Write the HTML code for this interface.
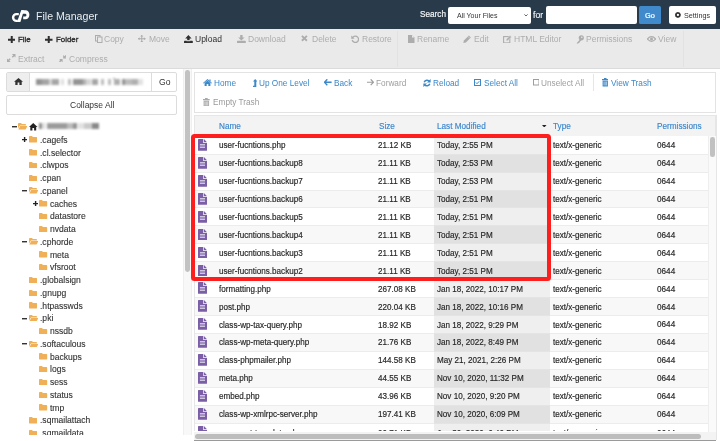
<!DOCTYPE html>
<html><head><meta charset="utf-8"><style>
html,body{margin:0;padding:0;width:720px;height:441px;overflow:hidden;background:#fff;}
body{position:relative;font-family:"Liberation Sans",sans-serif;}
.t{position:absolute;white-space:nowrap;line-height:1;will-change:transform;}
.r{position:absolute;display:block;}
</style></head><body>
<div class="r" style="left:0px;top:0px;width:720px;height:29px;background:#293a4a;"></div>
<svg class="r" style="left:9px;top:9px;" width="24" height="15" viewBox="0 0 24 15"><path d="M9.8 5.1 H7.5 A3.4 3.4 0 0 0 7.5 11.9 H8.8" fill="none" stroke="#fff" stroke-width="2.4"/><path d="M8.0 13.1 L11.4 13.1 L14.9 1.3 L12.2 1.3Z" fill="#fff"/><path d="M12.2 1.3 H16.6 A3.8 4.45 0 0 1 16.6 10.2 H14.2 V7.6 H16.0 A1.45 1.45 0 0 0 16.0 4.7 H13.5Z" fill="#fff"/></svg>
<div class="t" style="left:35.60px;top:11.03px;font-size:10.6px;color:#e9edf0;font-weight:normal;">File Manager</div>
<div class="t" style="left:420.30px;top:11.16px;font-size:8.2px;color:#f2f4f6;font-weight:normal;-webkit-text-stroke:0.2px #f2f4f6">Search</div>
<div class="r" style="left:448px;top:6.5px;width:82.5px;height:17px;background:#fff;border-radius:2px"></div>
<div class="t" style="left:456.70px;top:11.67px;font-size:7px;color:#333;font-weight:normal;">All Your Files</div>
<svg class="r" style="left:524.2px;top:14.4px;" width="4" height="2.6" viewBox="0 0 4 2.6"><path d="M0.4 0.4 L2 2 L3.6 0.4" stroke="#555" stroke-width="0.9" fill="none"/></svg>
<div class="t" style="left:532.50px;top:10.72px;font-size:8.6px;color:#f2f4f6;font-weight:normal;-webkit-text-stroke:0.15px #f2f4f6">for</div>
<div class="r" style="left:545.5px;top:6px;width:91.5px;height:17.5px;background:#fff;border-radius:2px"></div>
<div class="r" style="left:639.1px;top:6.1px;width:22.2px;height:17.7px;background:#408acc;border-radius:1.5px"></div>
<div class="t" style="left:645.30px;top:11.54px;font-size:7.4px;color:#fff;font-weight:normal;-webkit-text-stroke:0.2px #fff">Go</div>
<div class="r" style="left:669px;top:6.3px;width:47.4px;height:17.4px;background:#fff;border-radius:2px"></div>
<svg class="r" style="left:675.3px;top:11.9px;" width="5.8" height="5.8" viewBox="0 0 5.8 5.8"><g transform="translate(2.9 2.9)"><circle r="1.9" fill="none" stroke="#333" stroke-width="1.5"/><rect x="-0.6" y="-2.9" width="1.2" height="1.4" fill="#333" transform="rotate(0)"/><rect x="-0.6" y="-2.9" width="1.2" height="1.4" fill="#333" transform="rotate(45)"/><rect x="-0.6" y="-2.9" width="1.2" height="1.4" fill="#333" transform="rotate(90)"/><rect x="-0.6" y="-2.9" width="1.2" height="1.4" fill="#333" transform="rotate(135)"/><rect x="-0.6" y="-2.9" width="1.2" height="1.4" fill="#333" transform="rotate(180)"/><rect x="-0.6" y="-2.9" width="1.2" height="1.4" fill="#333" transform="rotate(225)"/><rect x="-0.6" y="-2.9" width="1.2" height="1.4" fill="#333" transform="rotate(270)"/><rect x="-0.6" y="-2.9" width="1.2" height="1.4" fill="#333" transform="rotate(315)"/></g></svg>
<div class="t" style="left:684.00px;top:11.51px;font-size:7.2px;color:#333;font-weight:normal;">Settings</div>
<div class="r" style="left:0px;top:29px;width:720px;height:39.5px;background:#eaeaea;"></div>
<div class="r" style="left:0px;top:68px;width:720px;height:1px;background:#d9dbdd;"></div>
<div class="t" style="left:18.00px;top:35.51px;font-size:7.9px;color:#2f2f2f;font-weight:normal;-webkit-text-stroke:0.35px #2f2f2f">File</div>
<div class="t" style="left:56.30px;top:35.51px;font-size:7.9px;color:#2f2f2f;font-weight:normal;-webkit-text-stroke:0.35px #2f2f2f">Folder</div>
<div class="t" style="left:104.40px;top:35.00px;font-size:8.5px;color:#adadad;font-weight:normal;">Copy</div>
<div class="t" style="left:148.90px;top:35.00px;font-size:8.5px;color:#adadad;font-weight:normal;">Move</div>
<div class="t" style="left:194.90px;top:35.00px;font-size:8.5px;color:#2f2f2f;font-weight:normal;">Upload</div>
<div class="t" style="left:247.50px;top:35.00px;font-size:8.5px;color:#adadad;font-weight:normal;">Download</div>
<div class="t" style="left:311.50px;top:35.00px;font-size:8.5px;color:#adadad;font-weight:normal;">Delete</div>
<div class="t" style="left:361.50px;top:35.00px;font-size:8.5px;color:#adadad;font-weight:normal;">Restore</div>
<div class="r" style="left:397px;top:31px;width:1px;height:36px;background:#e2e2e2;"></div>
<div class="t" style="left:417.00px;top:35.00px;font-size:8.5px;color:#adadad;font-weight:normal;">Rename</div>
<div class="t" style="left:473.80px;top:35.00px;font-size:8.5px;color:#adadad;font-weight:normal;">Edit</div>
<div class="t" style="left:514.30px;top:35.00px;font-size:8.5px;color:#adadad;font-weight:normal;">HTML Editor</div>
<div class="t" style="left:586.20px;top:35.00px;font-size:8.5px;color:#adadad;font-weight:normal;">Permissions</div>
<div class="t" style="left:658.20px;top:35.00px;font-size:8.5px;color:#adadad;font-weight:normal;">View</div>
<div class="r" style="left:683px;top:31px;width:1px;height:36px;background:#e2e2e2;"></div>
<div class="t" style="left:18.00px;top:54.60px;font-size:8.5px;color:#adadad;font-weight:normal;">Extract</div>
<div class="t" style="left:69.00px;top:54.60px;font-size:8.5px;color:#adadad;font-weight:normal;">Compress</div>
<svg class="r" style="left:7.5px;top:35.5px;" width="7.5" height="7.5" viewBox="0 0 7.5 7.5"><path d="M3.75 0 V7.5 M0 3.75 H7.5" stroke="#2f2f2f" stroke-width="2"/></svg>
<svg class="r" style="left:45.3px;top:35.5px;" width="7.5" height="7.5" viewBox="0 0 7.5 7.5"><path d="M3.75 0 V7.5 M0 3.75 H7.5" stroke="#2f2f2f" stroke-width="2"/></svg>
<svg class="r" style="left:95px;top:34.9px;" width="7.5" height="7.8" viewBox="0 0 7.5 7.8"><rect x="0.5" y="0.5" width="4.5" height="5.5" fill="none" stroke="#adadad" stroke-width="1"/><rect x="2.5" y="2" width="4.5" height="5.5" fill="#eaeaea" stroke="#adadad" stroke-width="1"/></svg>
<svg class="r" style="left:138.4px;top:34.8px;" width="7.5" height="7.5" viewBox="0 0 7.5 7.5"><path d="M3.75 0 V7.5 M0 3.75 H7.5" stroke="#adadad" stroke-width="1"/><path d="M3.75 0 L2.2 1.6 H5.3Z M3.75 7.5 L2.2 5.9 H5.3Z M0 3.75 L1.6 2.2 V5.3Z M7.5 3.75 L5.9 2.2 V5.3Z" fill="#adadad"/></svg>
<svg class="r" style="left:184.1px;top:34.9px;" width="8.8" height="8.2" viewBox="0 0 8.8 8.2"><path d="M4.4 0 L1.2 3.4 H3.2 V6 H5.6 V3.4 H7.6Z" fill="#2f2f2f"/><rect x="0" y="5.8" width="8.8" height="2.4" rx="0.6" fill="#2f2f2f"/><rect x="2.6" y="5.2" width="3.6" height="1" fill="#eaeaea"/></svg>
<svg class="r" style="left:237px;top:35px;" width="8.8" height="8.2" viewBox="0 0 8.8 8.2"><path d="M4.4 5.6 L1.2 2.4 H3.2 V0 H5.6 V2.4 H7.6Z" fill="#adadad"/><rect x="0" y="5.8" width="8.8" height="2.4" rx="0.6" fill="#adadad"/></svg>
<svg class="r" style="left:301.3px;top:35.3px;" width="6.8" height="6.6" viewBox="0 0 6.8 6.6"><path d="M0.9 0.9 L5.9 5.7 M5.9 0.9 L0.9 5.7" stroke="#adadad" stroke-width="1.9"/></svg>
<svg class="r" style="left:351px;top:34.7px;" width="8" height="8" viewBox="0 0 8 8"><path d="M1.6 2.6 A3.2 3.2 0 1 1 1.2 5" fill="none" stroke="#adadad" stroke-width="1.3"/><path d="M0.2 0.6 L0.4 4 L3.6 3.4Z" fill="#adadad"/></svg>
<svg class="r" style="left:408.3px;top:34.5px;" width="6.5" height="8.3" viewBox="0 0 6.5 8.3"><path d="M0 0 H4 L6.5 2.5 V8.3 H0Z" fill="#adadad"/><path d="M4 0 V2.5 H6.5" fill="#eaeaea"/></svg>
<svg class="r" style="left:463.2px;top:34.5px;" width="8.3" height="8.3" viewBox="0 0 8.3 8.3"><path d="M0.3 8.0 L0.9 5.4 L5.9 0.4 L7.9 2.4 L2.9 7.4Z" fill="#adadad"/><path d="M4.9 1.4 L6.9 3.4" stroke="#eaeaea" stroke-width="0.5"/></svg>
<svg class="r" style="left:503px;top:34.5px;" width="9" height="8.5" viewBox="0 0 9 8.5"><rect x="0.6" y="1.6" width="6.2" height="6.3" fill="none" stroke="#adadad" stroke-width="1.1"/><path d="M3 5.8 L3.3 4.2 L7 0.5 L8.5 2 L4.8 5.7Z" fill="#adadad" stroke="#eaeaea" stroke-width="0.5"/></svg>
<svg class="r" style="left:576px;top:34.6px;" width="8" height="9" viewBox="0 0 8 9"><circle cx="5.3" cy="2.8" r="2.6" fill="#adadad"/><path d="M4.2 4.2 L0.6 8.2 L1.4 8.8 L2.3 8 L3 8.5 L3.4 7.4 L5.6 4.8Z" fill="#adadad"/><circle cx="5.8" cy="2.3" r="0.8" fill="#eaeaea"/></svg>
<svg class="r" style="left:647px;top:36.2px;" width="9" height="6" viewBox="0 0 9 6"><path d="M0.3 3 Q4.5 -1.8 8.7 3 Q4.5 7.8 0.3 3Z" fill="none" stroke="#adadad" stroke-width="1.2"/><circle cx="4.5" cy="3" r="1.5" fill="#adadad"/></svg>
<svg class="r" style="left:7.3px;top:54.3px;" width="8.5" height="8" viewBox="0 0 8.5 8"><path d="M1.2 6.8 L3.2 4.8 M5.3 3.2 L7.3 1.2" stroke="#adadad" stroke-width="1.5"/><path d="M0 8 V4.4 L3.6 8Z M8.5 0 V3.6 L4.9 0Z" fill="#adadad"/></svg>
<svg class="r" style="left:58.7px;top:54.8px;" width="7.8" height="7.5" viewBox="0 0 7.8 7.5"><path d="M0.6 6.9 L2.6 4.9 M5.2 2.6 L7.2 0.6" stroke="#adadad" stroke-width="1.5"/><path d="M3.6 4 V7.4 L0.2 4Z M4.2 3.4 H7.6 L4.2 0Z" fill="#adadad"/></svg>
<div class="r" style="left:6px;top:72.2px;width:170.8px;height:19.8px;background:#fff;border:1px solid #dcdcdc;border-radius:2px;box-sizing:border-box"></div>
<div class="r" style="left:6.5px;top:72.7px;width:23px;height:18.8px;background:#eeeeee;border-right:1px solid #dcdcdc;box-sizing:border-box"></div>
<svg class="r" style="left:13.5px;top:78px;" width="9" height="7" viewBox="0 0 9 7"><path d="M4.5 0 L0 3.8 H1.3 V7 H3.6 V4.6 H5.4 V7 H7.7 V3.8 H9Z" fill="#333"/></svg>
<div class="r" style="left:34px;top:77.3px;width:112px;height:8px;filter:blur(0.9px);"><div style="position:absolute;left:1.9px;top:2.0px;width:5.9px;height:5.6px;background:#555;opacity:0.63"></div><div style="position:absolute;left:7.8px;top:2.0px;width:7.5px;height:5.6px;background:#666;opacity:0.59"></div><div style="position:absolute;left:15.2px;top:2.0px;width:3.0px;height:5.6px;background:#aaa;opacity:0.49"></div><div style="position:absolute;left:18.2px;top:2.0px;width:6.6px;height:5.6px;background:#666;opacity:0.59"></div><div style="position:absolute;left:27.3px;top:2.0px;width:2.5px;height:5.6px;background:#bbb;opacity:0.49"></div><div style="position:absolute;left:34.0px;top:2.0px;width:2.5px;height:5.6px;background:#888;opacity:0.56"></div><div style="position:absolute;left:39.0px;top:2.0px;width:10.0px;height:5.6px;background:#555;opacity:0.63"></div><div style="position:absolute;left:49.0px;top:2.0px;width:3.3px;height:5.6px;background:#777;opacity:0.56"></div><div style="position:absolute;left:52.3px;top:2.0px;width:5.0px;height:5.6px;background:#aaa;opacity:0.49"></div><div style="position:absolute;left:57.7px;top:2.0px;width:6.6px;height:5.6px;background:#666;opacity:0.59"></div><div style="position:absolute;left:66.8px;top:2.0px;width:3.4px;height:5.6px;background:#888;opacity:0.56"></div><div style="position:absolute;left:73.5px;top:2.0px;width:3.3px;height:5.6px;background:#888;opacity:0.56"></div><div style="position:absolute;left:80.0px;top:2.0px;width:6.0px;height:5.6px;background:#777;opacity:0.59"></div><div style="position:absolute;left:87.7px;top:2.0px;width:3.3px;height:5.6px;background:#555;opacity:0.63"></div><div style="position:absolute;left:91.0px;top:2.0px;width:6.7px;height:5.6px;background:#888;opacity:0.56"></div><div style="position:absolute;left:97.7px;top:2.0px;width:6.6px;height:5.6px;background:#777;opacity:0.59"></div><div style="position:absolute;left:104.3px;top:2.0px;width:5.0px;height:5.6px;background:#bbb;opacity:0.42"></div><div style="position:absolute;left:78.5px;top:0.4px;width:2.5px;height:1.8px;background:#555;opacity:0.56"></div></div>
<div class="r" style="left:151.3px;top:72.7px;width:1px;height:18.8px;background:#dcdcdc;"></div>
<div class="t" style="left:158.50px;top:78.32px;font-size:8.6px;color:#333;font-weight:normal;">Go</div>
<div class="r" style="left:6px;top:94.5px;width:170.8px;height:20px;background:#fff;border:1px solid #dcdcdc;border-radius:2px;box-sizing:border-box"></div>
<div class="t" style="left:69.80px;top:100.90px;font-size:8.5px;color:#333;font-weight:normal;">Collapse All</div>
<div class="r" style="left:183.2px;top:68.5px;width:8.7px;height:366px;background:#f8f8f8;border-left:1px solid #efefef;border-right:1px solid #efefef;box-sizing:border-box"></div>
<div class="r" style="left:185.1px;top:69.7px;width:4.8px;height:202.5px;background:#c2c2c2;border-radius:2.4px"></div>
<div class="r" style="left:12px;top:126px;width:5px;height:1px;background:#333;"></div>
<div class="r" style="left:12px;top:127px;width:5px;height:1px;background:#aaa;"></div>
<svg class="r" style="left:18px;top:123.4px;" width="9.4" height="6.4" viewBox="0 0 9.4 6.4"><path d="M0 0.8 Q0 0 0.8 0 H3.0 L3.9 1.0 H7.2 Q8.0 1.0 8.0 1.8 V2.4 H2.0 L0 5.6Z" fill="#f0b057"/><path d="M2.2 2.9 H9.4 L7.6 6.4 H0.3Z" fill="#f0b057"/></svg>
<svg class="r" style="left:29px;top:123.0px;" width="8.5" height="7.5" viewBox="0 0 8.5 7.5"><path d="M4.25 0 L0 3.9 H1.3 V7.5 H3.4 V5 H5.1 V7.5 H7.2 V3.9 H8.5Z" fill="#222"/></svg>
<div class="r" style="left:38px;top:121.9px;width:62px;height:8px;filter:blur(0.8px);"><div style="position:absolute;left:1.0px;top:1.5px;width:2.5px;height:5.3px;background:#444;opacity:0.63"></div><div style="position:absolute;left:5.0px;top:1.5px;width:2.0px;height:5.3px;background:#999;opacity:0.42"></div><div style="position:absolute;left:9.0px;top:1.5px;width:20.0px;height:5.3px;background:#555;opacity:0.59"></div><div style="position:absolute;left:29.0px;top:1.5px;width:6.0px;height:5.3px;background:#888;opacity:0.56"></div><div style="position:absolute;left:35.0px;top:1.5px;width:4.0px;height:5.3px;background:#555;opacity:0.63"></div><div style="position:absolute;left:40.0px;top:1.5px;width:6.0px;height:5.3px;background:#bbb;opacity:0.42"></div><div style="position:absolute;left:46.0px;top:1.5px;width:8.0px;height:5.3px;background:#999;opacity:0.52"></div><div style="position:absolute;left:54.0px;top:1.5px;width:6.6px;height:5.3px;background:#444;opacity:0.63"></div></div>
<div class="r" style="left:0;top:0;width:183px;height:435.1px;overflow:hidden"><svg class="r" style="left:22.2px;top:137.0px;" width="5.2" height="5.2" viewBox="0 0 5.2 5.2"><path d="M2.6 0 V5.2 M0 2.6 H5.2" stroke="#222" stroke-width="1.4"/></svg>
<svg class="r" style="left:28.9px;top:136.4px;" width="8.2" height="6.4" viewBox="0 0 8.2 6.4"><path d="M0 0.8 Q0 0 0.8 0 H3.0 L3.9 1.0 H7.4 Q8.2 1.0 8.2 1.8 V5.8 Q8.2 6.4 7.6 6.4 H0.6 Q0 6.4 0 5.8Z" fill="#f0b057"/></svg>
<div class="t" style="left:39.60px;top:135.76px;font-size:8.55px;color:#333;font-weight:normal;-webkit-text-stroke:0.12px #333">.cagefs</div>
<svg class="r" style="left:28.9px;top:149.16px;" width="8.2" height="6.4" viewBox="0 0 8.2 6.4"><path d="M0 0.8 Q0 0 0.8 0 H3.0 L3.9 1.0 H7.4 Q8.2 1.0 8.2 1.8 V5.8 Q8.2 6.4 7.6 6.4 H0.6 Q0 6.4 0 5.8Z" fill="#f0b057"/></svg>
<div class="t" style="left:39.60px;top:148.52px;font-size:8.55px;color:#333;font-weight:normal;-webkit-text-stroke:0.12px #333">.cl.selector</div>
<svg class="r" style="left:28.9px;top:161.92000000000002px;" width="8.2" height="6.4" viewBox="0 0 8.2 6.4"><path d="M0 0.8 Q0 0 0.8 0 H3.0 L3.9 1.0 H7.4 Q8.2 1.0 8.2 1.8 V5.8 Q8.2 6.4 7.6 6.4 H0.6 Q0 6.4 0 5.8Z" fill="#f0b057"/></svg>
<div class="t" style="left:39.60px;top:161.28px;font-size:8.55px;color:#333;font-weight:normal;-webkit-text-stroke:0.12px #333">.clwpos</div>
<svg class="r" style="left:28.9px;top:174.68px;" width="8.2" height="6.4" viewBox="0 0 8.2 6.4"><path d="M0 0.8 Q0 0 0.8 0 H3.0 L3.9 1.0 H7.4 Q8.2 1.0 8.2 1.8 V5.8 Q8.2 6.4 7.6 6.4 H0.6 Q0 6.4 0 5.8Z" fill="#f0b057"/></svg>
<div class="t" style="left:39.60px;top:174.04px;font-size:8.55px;color:#333;font-weight:normal;-webkit-text-stroke:0.12px #333">.cpan</div>
<div class="r" style="left:22px;top:190px;width:5px;height:1px;background:#333;"></div>
<div class="r" style="left:22px;top:191px;width:5px;height:1px;background:#aaa;"></div>
<svg class="r" style="left:28.6px;top:187.44px;" width="9.4" height="6.4" viewBox="0 0 9.4 6.4"><path d="M0 0.8 Q0 0 0.8 0 H3.0 L3.9 1.0 H7.2 Q8.0 1.0 8.0 1.8 V2.4 H2.0 L0 5.6Z" fill="#f0b057"/><path d="M2.2 2.9 H9.4 L7.6 6.4 H0.3Z" fill="#f0b057"/></svg>
<div class="t" style="left:39.60px;top:186.80px;font-size:8.55px;color:#333;font-weight:normal;-webkit-text-stroke:0.12px #333">.cpanel</div>
<svg class="r" style="left:32.7px;top:200.8px;" width="5.2" height="5.2" viewBox="0 0 5.2 5.2"><path d="M2.6 0 V5.2 M0 2.6 H5.2" stroke="#222" stroke-width="1.4"/></svg>
<svg class="r" style="left:39.4px;top:200.20000000000002px;" width="8.2" height="6.4" viewBox="0 0 8.2 6.4"><path d="M0 0.8 Q0 0 0.8 0 H3.0 L3.9 1.0 H7.4 Q8.2 1.0 8.2 1.8 V5.8 Q8.2 6.4 7.6 6.4 H0.6 Q0 6.4 0 5.8Z" fill="#f0b057"/></svg>
<div class="t" style="left:50.10px;top:199.56px;font-size:8.55px;color:#333;font-weight:normal;-webkit-text-stroke:0.12px #333">caches</div>
<svg class="r" style="left:39.4px;top:212.96px;" width="8.2" height="6.4" viewBox="0 0 8.2 6.4"><path d="M0 0.8 Q0 0 0.8 0 H3.0 L3.9 1.0 H7.4 Q8.2 1.0 8.2 1.8 V5.8 Q8.2 6.4 7.6 6.4 H0.6 Q0 6.4 0 5.8Z" fill="#f0b057"/></svg>
<div class="t" style="left:50.10px;top:212.32px;font-size:8.55px;color:#333;font-weight:normal;-webkit-text-stroke:0.12px #333">datastore</div>
<svg class="r" style="left:39.4px;top:225.72px;" width="8.2" height="6.4" viewBox="0 0 8.2 6.4"><path d="M0 0.8 Q0 0 0.8 0 H3.0 L3.9 1.0 H7.4 Q8.2 1.0 8.2 1.8 V5.8 Q8.2 6.4 7.6 6.4 H0.6 Q0 6.4 0 5.8Z" fill="#f0b057"/></svg>
<div class="t" style="left:50.10px;top:225.08px;font-size:8.55px;color:#333;font-weight:normal;-webkit-text-stroke:0.12px #333">nvdata</div>
<div class="r" style="left:22px;top:241px;width:5px;height:1px;background:#333;"></div>
<div class="r" style="left:22px;top:242px;width:5px;height:1px;background:#aaa;"></div>
<svg class="r" style="left:28.6px;top:238.48px;" width="9.4" height="6.4" viewBox="0 0 9.4 6.4"><path d="M0 0.8 Q0 0 0.8 0 H3.0 L3.9 1.0 H7.2 Q8.0 1.0 8.0 1.8 V2.4 H2.0 L0 5.6Z" fill="#f0b057"/><path d="M2.2 2.9 H9.4 L7.6 6.4 H0.3Z" fill="#f0b057"/></svg>
<div class="t" style="left:39.60px;top:237.84px;font-size:8.55px;color:#333;font-weight:normal;-webkit-text-stroke:0.12px #333">.cphorde</div>
<svg class="r" style="left:39.4px;top:251.24px;" width="8.2" height="6.4" viewBox="0 0 8.2 6.4"><path d="M0 0.8 Q0 0 0.8 0 H3.0 L3.9 1.0 H7.4 Q8.2 1.0 8.2 1.8 V5.8 Q8.2 6.4 7.6 6.4 H0.6 Q0 6.4 0 5.8Z" fill="#f0b057"/></svg>
<div class="t" style="left:50.10px;top:250.60px;font-size:8.55px;color:#333;font-weight:normal;-webkit-text-stroke:0.12px #333">meta</div>
<svg class="r" style="left:39.4px;top:264.0px;" width="8.2" height="6.4" viewBox="0 0 8.2 6.4"><path d="M0 0.8 Q0 0 0.8 0 H3.0 L3.9 1.0 H7.4 Q8.2 1.0 8.2 1.8 V5.8 Q8.2 6.4 7.6 6.4 H0.6 Q0 6.4 0 5.8Z" fill="#f0b057"/></svg>
<div class="t" style="left:50.10px;top:263.36px;font-size:8.55px;color:#333;font-weight:normal;-webkit-text-stroke:0.12px #333">vfsroot</div>
<svg class="r" style="left:28.9px;top:276.76px;" width="8.2" height="6.4" viewBox="0 0 8.2 6.4"><path d="M0 0.8 Q0 0 0.8 0 H3.0 L3.9 1.0 H7.4 Q8.2 1.0 8.2 1.8 V5.8 Q8.2 6.4 7.6 6.4 H0.6 Q0 6.4 0 5.8Z" fill="#f0b057"/></svg>
<div class="t" style="left:39.60px;top:276.12px;font-size:8.55px;color:#333;font-weight:normal;-webkit-text-stroke:0.12px #333">.globalsign</div>
<svg class="r" style="left:28.9px;top:289.52px;" width="8.2" height="6.4" viewBox="0 0 8.2 6.4"><path d="M0 0.8 Q0 0 0.8 0 H3.0 L3.9 1.0 H7.4 Q8.2 1.0 8.2 1.8 V5.8 Q8.2 6.4 7.6 6.4 H0.6 Q0 6.4 0 5.8Z" fill="#f0b057"/></svg>
<div class="t" style="left:39.60px;top:288.88px;font-size:8.55px;color:#333;font-weight:normal;-webkit-text-stroke:0.12px #333">.gnupg</div>
<svg class="r" style="left:28.9px;top:302.28px;" width="8.2" height="6.4" viewBox="0 0 8.2 6.4"><path d="M0 0.8 Q0 0 0.8 0 H3.0 L3.9 1.0 H7.4 Q8.2 1.0 8.2 1.8 V5.8 Q8.2 6.4 7.6 6.4 H0.6 Q0 6.4 0 5.8Z" fill="#f0b057"/></svg>
<div class="t" style="left:39.60px;top:301.64px;font-size:8.55px;color:#333;font-weight:normal;-webkit-text-stroke:0.12px #333">.htpasswds</div>
<div class="r" style="left:22px;top:318px;width:5px;height:1px;background:#333;"></div>
<div class="r" style="left:22px;top:319px;width:5px;height:1px;background:#aaa;"></div>
<svg class="r" style="left:28.6px;top:315.03999999999996px;" width="9.4" height="6.4" viewBox="0 0 9.4 6.4"><path d="M0 0.8 Q0 0 0.8 0 H3.0 L3.9 1.0 H7.2 Q8.0 1.0 8.0 1.8 V2.4 H2.0 L0 5.6Z" fill="#f0b057"/><path d="M2.2 2.9 H9.4 L7.6 6.4 H0.3Z" fill="#f0b057"/></svg>
<div class="t" style="left:39.60px;top:314.40px;font-size:8.55px;color:#333;font-weight:normal;-webkit-text-stroke:0.12px #333">.pki</div>
<svg class="r" style="left:39.4px;top:327.79999999999995px;" width="8.2" height="6.4" viewBox="0 0 8.2 6.4"><path d="M0 0.8 Q0 0 0.8 0 H3.0 L3.9 1.0 H7.4 Q8.2 1.0 8.2 1.8 V5.8 Q8.2 6.4 7.6 6.4 H0.6 Q0 6.4 0 5.8Z" fill="#f0b057"/></svg>
<div class="t" style="left:50.10px;top:327.16px;font-size:8.55px;color:#333;font-weight:normal;-webkit-text-stroke:0.12px #333">nssdb</div>
<div class="r" style="left:22px;top:343px;width:5px;height:1px;background:#333;"></div>
<div class="r" style="left:22px;top:344px;width:5px;height:1px;background:#aaa;"></div>
<svg class="r" style="left:28.6px;top:340.55999999999995px;" width="9.4" height="6.4" viewBox="0 0 9.4 6.4"><path d="M0 0.8 Q0 0 0.8 0 H3.0 L3.9 1.0 H7.2 Q8.0 1.0 8.0 1.8 V2.4 H2.0 L0 5.6Z" fill="#f0b057"/><path d="M2.2 2.9 H9.4 L7.6 6.4 H0.3Z" fill="#f0b057"/></svg>
<div class="t" style="left:39.60px;top:339.92px;font-size:8.55px;color:#333;font-weight:normal;-webkit-text-stroke:0.12px #333">.softaculous</div>
<svg class="r" style="left:39.4px;top:353.31999999999994px;" width="8.2" height="6.4" viewBox="0 0 8.2 6.4"><path d="M0 0.8 Q0 0 0.8 0 H3.0 L3.9 1.0 H7.4 Q8.2 1.0 8.2 1.8 V5.8 Q8.2 6.4 7.6 6.4 H0.6 Q0 6.4 0 5.8Z" fill="#f0b057"/></svg>
<div class="t" style="left:50.10px;top:352.68px;font-size:8.55px;color:#333;font-weight:normal;-webkit-text-stroke:0.12px #333">backups</div>
<svg class="r" style="left:39.4px;top:366.08px;" width="8.2" height="6.4" viewBox="0 0 8.2 6.4"><path d="M0 0.8 Q0 0 0.8 0 H3.0 L3.9 1.0 H7.4 Q8.2 1.0 8.2 1.8 V5.8 Q8.2 6.4 7.6 6.4 H0.6 Q0 6.4 0 5.8Z" fill="#f0b057"/></svg>
<div class="t" style="left:50.10px;top:365.44px;font-size:8.55px;color:#333;font-weight:normal;-webkit-text-stroke:0.12px #333">logs</div>
<svg class="r" style="left:39.4px;top:378.84px;" width="8.2" height="6.4" viewBox="0 0 8.2 6.4"><path d="M0 0.8 Q0 0 0.8 0 H3.0 L3.9 1.0 H7.4 Q8.2 1.0 8.2 1.8 V5.8 Q8.2 6.4 7.6 6.4 H0.6 Q0 6.4 0 5.8Z" fill="#f0b057"/></svg>
<div class="t" style="left:50.10px;top:378.20px;font-size:8.55px;color:#333;font-weight:normal;-webkit-text-stroke:0.12px #333">sess</div>
<svg class="r" style="left:39.4px;top:391.59999999999997px;" width="8.2" height="6.4" viewBox="0 0 8.2 6.4"><path d="M0 0.8 Q0 0 0.8 0 H3.0 L3.9 1.0 H7.4 Q8.2 1.0 8.2 1.8 V5.8 Q8.2 6.4 7.6 6.4 H0.6 Q0 6.4 0 5.8Z" fill="#f0b057"/></svg>
<div class="t" style="left:50.10px;top:390.96px;font-size:8.55px;color:#333;font-weight:normal;-webkit-text-stroke:0.12px #333">status</div>
<svg class="r" style="left:39.4px;top:404.35999999999996px;" width="8.2" height="6.4" viewBox="0 0 8.2 6.4"><path d="M0 0.8 Q0 0 0.8 0 H3.0 L3.9 1.0 H7.4 Q8.2 1.0 8.2 1.8 V5.8 Q8.2 6.4 7.6 6.4 H0.6 Q0 6.4 0 5.8Z" fill="#f0b057"/></svg>
<div class="t" style="left:50.10px;top:403.72px;font-size:8.55px;color:#333;font-weight:normal;-webkit-text-stroke:0.12px #333">tmp</div>
<svg class="r" style="left:28.9px;top:417.11999999999995px;" width="8.2" height="6.4" viewBox="0 0 8.2 6.4"><path d="M0 0.8 Q0 0 0.8 0 H3.0 L3.9 1.0 H7.4 Q8.2 1.0 8.2 1.8 V5.8 Q8.2 6.4 7.6 6.4 H0.6 Q0 6.4 0 5.8Z" fill="#f0b057"/></svg>
<div class="t" style="left:39.60px;top:416.48px;font-size:8.55px;color:#333;font-weight:normal;-webkit-text-stroke:0.12px #333">.sqmailattach</div>
<svg class="r" style="left:28.9px;top:429.88px;" width="8.2" height="6.4" viewBox="0 0 8.2 6.4"><path d="M0 0.8 Q0 0 0.8 0 H3.0 L3.9 1.0 H7.4 Q8.2 1.0 8.2 1.8 V5.8 Q8.2 6.4 7.6 6.4 H0.6 Q0 6.4 0 5.8Z" fill="#f0b057"/></svg>
<div class="t" style="left:39.60px;top:429.24px;font-size:8.55px;color:#333;font-weight:normal;-webkit-text-stroke:0.12px #333">.sqmaildata</div>
</div>
<div class="r" style="left:194.4px;top:72.4px;width:522.1px;height:40.9px;background:#fff;border:1px solid #e3e3e3;box-sizing:border-box"></div>
<svg class="r" style="left:202.8px;top:78.8px;" width="9" height="7" viewBox="0 0 9 7"><path d="M4.5 0 L0 3.9 L0.6 4.5 L4.5 1.2 L8.4 4.5 L9 3.9Z M6.4 0.4 H7.6 V2.4 L6.4 1.4Z" fill="#3c88c9"/><path d="M1.6 3.9 L4.5 1.6 L7.4 3.9 V7 H5.3 V5 H3.7 V7 H1.6Z" fill="#3c88c9"/></svg>
<div class="t" style="left:214.00px;top:79.82px;font-size:8.25px;color:#3c88c9;font-weight:normal;">Home</div>
<svg class="r" style="left:252.7px;top:78.5px;" width="4.3" height="8" viewBox="0 0 4.3 8"><path d="M2.15 0 L0 2.4 H1.3 V6.8 H0 V8 H3.3 V2.4 H4.3Z" fill="#3c88c9"/></svg>
<div class="t" style="left:259.30px;top:79.82px;font-size:8.25px;color:#3c88c9;font-weight:normal;">Up One Level</div>
<svg class="r" style="left:324.4px;top:79.2px;" width="7.6" height="6.5" viewBox="0 0 7.6 6.5"><path d="M3.3 0.3 L0.5 3.25 L3.3 6.2 M0.8 3.25 H7.6" stroke="#3c88c9" stroke-width="1.4" fill="none"/></svg>
<div class="t" style="left:333.80px;top:79.82px;font-size:8.25px;color:#3c88c9;font-weight:normal;">Back</div>
<svg class="r" style="left:367px;top:79.2px;" width="7" height="6.5" viewBox="0 0 7 6.5"><path d="M3.7 0.3 L6.5 3.25 L3.7 6.2 M6.2 3.25 H0" stroke="#9e9e9e" stroke-width="1.2" fill="none"/></svg>
<div class="t" style="left:376.30px;top:79.82px;font-size:8.25px;color:#9e9e9e;font-weight:normal;">Forward</div>
<svg class="r" style="left:422.5px;top:78.6px;" width="8" height="8" viewBox="0 0 8 8"><path d="M6.6 2.4 A3.1 3.1 0 0 0 1.2 3.2" fill="none" stroke="#3c88c9" stroke-width="1.5"/><path d="M7.6 0 V3.6 H4Z" fill="#3c88c9"/><path d="M1.4 5.6 A3.1 3.1 0 0 0 6.8 4.8" fill="none" stroke="#3c88c9" stroke-width="1.5"/><path d="M0.4 8 V4.4 H4Z" fill="#3c88c9"/></svg>
<div class="t" style="left:432.50px;top:79.82px;font-size:8.25px;color:#3c88c9;font-weight:normal;">Reload</div>
<svg class="r" style="left:474.2px;top:79.0px;" width="7" height="7" viewBox="0 0 7 7"><rect x="0.5" y="0.5" width="6" height="6" fill="none" stroke="#3c88c9" stroke-width="1"/><path d="M1.8 3.4 L3 4.7 L5.3 2.2" fill="none" stroke="#3c88c9" stroke-width="1"/></svg>
<div class="t" style="left:483.60px;top:79.82px;font-size:8.25px;color:#3c88c9;font-weight:normal;">Select All</div>
<svg class="r" style="left:532.5px;top:79.3px;" width="6.5" height="6.5" viewBox="0 0 6.5 6.5"><rect x="0.5" y="0.5" width="5.5" height="5.5" fill="none" stroke="#9e9e9e" stroke-width="1"/></svg>
<div class="t" style="left:541.30px;top:79.82px;font-size:8.25px;color:#9e9e9e;font-weight:normal;">Unselect All</div>
<div class="r" style="left:593px;top:74px;width:1px;height:17px;background:#e6e6e6;"></div>
<svg class="r" style="left:601.8px;top:78.0px;" width="6.5" height="8.5" viewBox="0 0 6.5 8.5"><rect x="0" y="1" width="6.5" height="1.2" fill="#3c88c9"/><rect x="2" y="0" width="2.5" height="1.5" fill="#3c88c9"/><path d="M0.6 2.6 H5.9 V8.5 H0.6Z" fill="#3c88c9"/><path d="M2 3.5 V7.5 M3.25 3.5 V7.5 M4.5 3.5 V7.5" stroke="#fff" stroke-width="0.5"/></svg>
<div class="t" style="left:610.80px;top:79.82px;font-size:8.25px;color:#3c88c9;font-weight:normal;">View Trash</div>
<svg class="r" style="left:203.3px;top:97.8px;" width="6.7" height="8.5" viewBox="0 0 6.7 8.5"><rect x="0" y="1" width="6.7" height="1.2" fill="#aaa"/><rect x="2" y="0" width="2.7" height="1.5" fill="#aaa"/><path d="M0.6 2.6 H6.1 V8.5 H0.6Z" fill="#aaa"/><path d="M2 3.5 V7.5 M3.35 3.5 V7.5 M4.7 3.5 V7.5" stroke="#fff" stroke-width="0.5"/></svg>
<div class="t" style="left:212.90px;top:99.22px;font-size:8.25px;color:#9a9a9a;font-weight:normal;">Empty Trash</div>
<div class="r" style="left:194.4px;top:115.4px;width:522.1px;height:20.4px;background:#f3f3f3;border:1px solid #e6e6e6;border-bottom:none;box-sizing:border-box"></div>
<div class="t" style="left:218.50px;top:122.86px;font-size:8.2px;color:#3a86cc;font-weight:normal;-webkit-text-stroke:0.15px #3a86cc">Name</div>
<div class="t" style="left:378.80px;top:122.86px;font-size:8.2px;color:#3a86cc;font-weight:normal;-webkit-text-stroke:0.15px #3a86cc">Size</div>
<div class="t" style="left:437.00px;top:122.86px;font-size:8.2px;color:#3a86cc;font-weight:normal;-webkit-text-stroke:0.15px #3a86cc">Last Modified</div>
<svg class="r" style="left:542px;top:124.8px;" width="4.5" height="2.5" viewBox="0 0 4.5 2.5"><path d="M0 0 H4.5 L2.25 2.5Z" fill="#222"/></svg>
<div class="t" style="left:552.80px;top:122.86px;font-size:8.2px;color:#3a86cc;font-weight:normal;-webkit-text-stroke:0.15px #3a86cc">Type</div>
<div class="t" style="left:657.00px;top:122.86px;font-size:8.2px;color:#3a86cc;font-weight:normal;-webkit-text-stroke:0.15px #3a86cc">Permissions</div>
<div class="r" style="left:194.4px;top:135.8px;width:513.4px;height:295.4px;overflow:hidden;border-left:1px solid #e6e6e6;box-sizing:border-box"><div class="r" style="left:0px;top:0.0px;width:513.4px;height:17.92px;background:#ffffff;"></div>
<div class="r" style="left:238.6px;top:0.0px;width:116px;height:17.92px;background:#efefef;"></div>
<svg class="r" style="left:2.5999999999999943px;top:3.3px;" width="9" height="11.8" viewBox="0 0 9 11.8"><path d="M0.5 0 H5.2 V3.9 H9 V11.3 Q9 11.8 8.5 11.8 H0.5 Q0 11.8 0 11.3 V0.5 Q0 0 0.5 0Z" fill="#7a5fa6"/><path d="M5.9 0.1 L9 3.3 H5.9Z" fill="#7a5fa6"/><rect x="1.9" y="5.0" width="5.1" height="1.0" fill="#cfc5e0"/><rect x="1.9" y="6.5" width="5.1" height="1.0" fill="#cfc5e0"/><rect x="1.9" y="8.0" width="5.1" height="1.0" fill="#cfc5e0"/></svg>
<div class="t" style="left:23.40px;top:6.54px;font-size:8.1px;color:#262626;font-weight:normal;-webkit-text-stroke:0.16px #262626;transform:scaleY(1.11);transform-origin:0 0.8465em">user-fucntions.php</div>
<div class="t" style="left:182.80px;top:6.54px;font-size:8.1px;color:#262626;font-weight:normal;-webkit-text-stroke:0.16px #262626;transform:scaleY(1.11);transform-origin:0 0.8465em">21.12 KB</div>
<div class="t" style="left:241.60px;top:6.54px;font-size:8.1px;color:#262626;font-weight:normal;-webkit-text-stroke:0.16px #262626;transform:scaleY(1.11);transform-origin:0 0.8465em">Today, 2:55 PM</div>
<div class="t" style="left:357.40px;top:6.54px;font-size:8.1px;color:#262626;font-weight:normal;-webkit-text-stroke:0.16px #262626;transform:scaleY(1.11);transform-origin:0 0.8465em">text/x-generic</div>
<div class="t" style="left:461.60px;top:6.46px;font-size:8.2px;color:#262626;font-weight:normal;-webkit-text-stroke:0.16px #262626;transform:scaleY(1.11);transform-origin:0 0.8465em">0644</div>
<div class="r" style="left:0px;top:17.92px;width:513.4px;height:17.92px;background:#f8f8f8;border-top:1px solid #ececec;box-sizing:border-box"></div>
<div class="r" style="left:238.6px;top:17.92px;width:116px;height:17.92px;background:#e1e1e1;border-top:1px solid #e4e4e4;box-sizing:border-box"></div>
<svg class="r" style="left:2.5999999999999943px;top:21.220000000000017px;" width="9" height="11.8" viewBox="0 0 9 11.8"><path d="M0.5 0 H5.2 V3.9 H9 V11.3 Q9 11.8 8.5 11.8 H0.5 Q0 11.8 0 11.3 V0.5 Q0 0 0.5 0Z" fill="#7a5fa6"/><path d="M5.9 0.1 L9 3.3 H5.9Z" fill="#7a5fa6"/><rect x="1.9" y="5.0" width="5.1" height="1.0" fill="#cfc5e0"/><rect x="1.9" y="6.5" width="5.1" height="1.0" fill="#cfc5e0"/><rect x="1.9" y="8.0" width="5.1" height="1.0" fill="#cfc5e0"/></svg>
<div class="t" style="left:23.40px;top:24.46px;font-size:8.1px;color:#262626;font-weight:normal;-webkit-text-stroke:0.16px #262626;transform:scaleY(1.11);transform-origin:0 0.8465em">user-fucntions.backup8</div>
<div class="t" style="left:182.80px;top:24.46px;font-size:8.1px;color:#262626;font-weight:normal;-webkit-text-stroke:0.16px #262626;transform:scaleY(1.11);transform-origin:0 0.8465em">21.11 KB</div>
<div class="t" style="left:241.60px;top:24.46px;font-size:8.1px;color:#262626;font-weight:normal;-webkit-text-stroke:0.16px #262626;transform:scaleY(1.11);transform-origin:0 0.8465em">Today, 2:53 PM</div>
<div class="t" style="left:357.40px;top:24.46px;font-size:8.1px;color:#262626;font-weight:normal;-webkit-text-stroke:0.16px #262626;transform:scaleY(1.11);transform-origin:0 0.8465em">text/x-generic</div>
<div class="t" style="left:461.60px;top:24.38px;font-size:8.2px;color:#262626;font-weight:normal;-webkit-text-stroke:0.16px #262626;transform:scaleY(1.11);transform-origin:0 0.8465em">0644</div>
<div class="r" style="left:0px;top:35.84px;width:513.4px;height:17.92px;background:#ffffff;border-top:1px solid #ececec;box-sizing:border-box"></div>
<div class="r" style="left:238.6px;top:35.84px;width:116px;height:17.92px;background:#efefef;border-top:1px solid #e4e4e4;box-sizing:border-box"></div>
<svg class="r" style="left:2.5999999999999943px;top:39.14px;" width="9" height="11.8" viewBox="0 0 9 11.8"><path d="M0.5 0 H5.2 V3.9 H9 V11.3 Q9 11.8 8.5 11.8 H0.5 Q0 11.8 0 11.3 V0.5 Q0 0 0.5 0Z" fill="#7a5fa6"/><path d="M5.9 0.1 L9 3.3 H5.9Z" fill="#7a5fa6"/><rect x="1.9" y="5.0" width="5.1" height="1.0" fill="#cfc5e0"/><rect x="1.9" y="6.5" width="5.1" height="1.0" fill="#cfc5e0"/><rect x="1.9" y="8.0" width="5.1" height="1.0" fill="#cfc5e0"/></svg>
<div class="t" style="left:23.40px;top:42.38px;font-size:8.1px;color:#262626;font-weight:normal;-webkit-text-stroke:0.16px #262626;transform:scaleY(1.11);transform-origin:0 0.8465em">user-fucntions.backup7</div>
<div class="t" style="left:182.80px;top:42.38px;font-size:8.1px;color:#262626;font-weight:normal;-webkit-text-stroke:0.16px #262626;transform:scaleY(1.11);transform-origin:0 0.8465em">21.11 KB</div>
<div class="t" style="left:241.60px;top:42.38px;font-size:8.1px;color:#262626;font-weight:normal;-webkit-text-stroke:0.16px #262626;transform:scaleY(1.11);transform-origin:0 0.8465em">Today, 2:53 PM</div>
<div class="t" style="left:357.40px;top:42.38px;font-size:8.1px;color:#262626;font-weight:normal;-webkit-text-stroke:0.16px #262626;transform:scaleY(1.11);transform-origin:0 0.8465em">text/x-generic</div>
<div class="t" style="left:461.60px;top:42.30px;font-size:8.2px;color:#262626;font-weight:normal;-webkit-text-stroke:0.16px #262626;transform:scaleY(1.11);transform-origin:0 0.8465em">0644</div>
<div class="r" style="left:0px;top:53.76px;width:513.4px;height:17.92px;background:#f8f8f8;border-top:1px solid #ececec;box-sizing:border-box"></div>
<div class="r" style="left:238.6px;top:53.76px;width:116px;height:17.92px;background:#e1e1e1;border-top:1px solid #e4e4e4;box-sizing:border-box"></div>
<svg class="r" style="left:2.5999999999999943px;top:57.05999999999999px;" width="9" height="11.8" viewBox="0 0 9 11.8"><path d="M0.5 0 H5.2 V3.9 H9 V11.3 Q9 11.8 8.5 11.8 H0.5 Q0 11.8 0 11.3 V0.5 Q0 0 0.5 0Z" fill="#7a5fa6"/><path d="M5.9 0.1 L9 3.3 H5.9Z" fill="#7a5fa6"/><rect x="1.9" y="5.0" width="5.1" height="1.0" fill="#cfc5e0"/><rect x="1.9" y="6.5" width="5.1" height="1.0" fill="#cfc5e0"/><rect x="1.9" y="8.0" width="5.1" height="1.0" fill="#cfc5e0"/></svg>
<div class="t" style="left:23.40px;top:60.30px;font-size:8.1px;color:#262626;font-weight:normal;-webkit-text-stroke:0.16px #262626;transform:scaleY(1.11);transform-origin:0 0.8465em">user-fucntions.backup6</div>
<div class="t" style="left:182.80px;top:60.30px;font-size:8.1px;color:#262626;font-weight:normal;-webkit-text-stroke:0.16px #262626;transform:scaleY(1.11);transform-origin:0 0.8465em">21.11 KB</div>
<div class="t" style="left:241.60px;top:60.30px;font-size:8.1px;color:#262626;font-weight:normal;-webkit-text-stroke:0.16px #262626;transform:scaleY(1.11);transform-origin:0 0.8465em">Today, 2:51 PM</div>
<div class="t" style="left:357.40px;top:60.30px;font-size:8.1px;color:#262626;font-weight:normal;-webkit-text-stroke:0.16px #262626;transform:scaleY(1.11);transform-origin:0 0.8465em">text/x-generic</div>
<div class="t" style="left:461.60px;top:60.22px;font-size:8.2px;color:#262626;font-weight:normal;-webkit-text-stroke:0.16px #262626;transform:scaleY(1.11);transform-origin:0 0.8465em">0644</div>
<div class="r" style="left:0px;top:71.68px;width:513.4px;height:17.92px;background:#ffffff;border-top:1px solid #ececec;box-sizing:border-box"></div>
<div class="r" style="left:238.6px;top:71.68px;width:116px;height:17.92px;background:#efefef;border-top:1px solid #e4e4e4;box-sizing:border-box"></div>
<svg class="r" style="left:2.5999999999999943px;top:74.98px;" width="9" height="11.8" viewBox="0 0 9 11.8"><path d="M0.5 0 H5.2 V3.9 H9 V11.3 Q9 11.8 8.5 11.8 H0.5 Q0 11.8 0 11.3 V0.5 Q0 0 0.5 0Z" fill="#7a5fa6"/><path d="M5.9 0.1 L9 3.3 H5.9Z" fill="#7a5fa6"/><rect x="1.9" y="5.0" width="5.1" height="1.0" fill="#cfc5e0"/><rect x="1.9" y="6.5" width="5.1" height="1.0" fill="#cfc5e0"/><rect x="1.9" y="8.0" width="5.1" height="1.0" fill="#cfc5e0"/></svg>
<div class="t" style="left:23.40px;top:78.22px;font-size:8.1px;color:#262626;font-weight:normal;-webkit-text-stroke:0.16px #262626;transform:scaleY(1.11);transform-origin:0 0.8465em">user-fucntions.backup5</div>
<div class="t" style="left:182.80px;top:78.22px;font-size:8.1px;color:#262626;font-weight:normal;-webkit-text-stroke:0.16px #262626;transform:scaleY(1.11);transform-origin:0 0.8465em">21.11 KB</div>
<div class="t" style="left:241.60px;top:78.22px;font-size:8.1px;color:#262626;font-weight:normal;-webkit-text-stroke:0.16px #262626;transform:scaleY(1.11);transform-origin:0 0.8465em">Today, 2:51 PM</div>
<div class="t" style="left:357.40px;top:78.22px;font-size:8.1px;color:#262626;font-weight:normal;-webkit-text-stroke:0.16px #262626;transform:scaleY(1.11);transform-origin:0 0.8465em">text/x-generic</div>
<div class="t" style="left:461.60px;top:78.14px;font-size:8.2px;color:#262626;font-weight:normal;-webkit-text-stroke:0.16px #262626;transform:scaleY(1.11);transform-origin:0 0.8465em">0644</div>
<div class="r" style="left:0px;top:89.6px;width:513.4px;height:17.92px;background:#f8f8f8;border-top:1px solid #ececec;box-sizing:border-box"></div>
<div class="r" style="left:238.6px;top:89.6px;width:116px;height:17.92px;background:#e1e1e1;border-top:1px solid #e4e4e4;box-sizing:border-box"></div>
<svg class="r" style="left:2.5999999999999943px;top:92.90000000000002px;" width="9" height="11.8" viewBox="0 0 9 11.8"><path d="M0.5 0 H5.2 V3.9 H9 V11.3 Q9 11.8 8.5 11.8 H0.5 Q0 11.8 0 11.3 V0.5 Q0 0 0.5 0Z" fill="#7a5fa6"/><path d="M5.9 0.1 L9 3.3 H5.9Z" fill="#7a5fa6"/><rect x="1.9" y="5.0" width="5.1" height="1.0" fill="#cfc5e0"/><rect x="1.9" y="6.5" width="5.1" height="1.0" fill="#cfc5e0"/><rect x="1.9" y="8.0" width="5.1" height="1.0" fill="#cfc5e0"/></svg>
<div class="t" style="left:23.40px;top:96.14px;font-size:8.1px;color:#262626;font-weight:normal;-webkit-text-stroke:0.16px #262626;transform:scaleY(1.11);transform-origin:0 0.8465em">user-fucntions.backup4</div>
<div class="t" style="left:182.80px;top:96.14px;font-size:8.1px;color:#262626;font-weight:normal;-webkit-text-stroke:0.16px #262626;transform:scaleY(1.11);transform-origin:0 0.8465em">21.11 KB</div>
<div class="t" style="left:241.60px;top:96.14px;font-size:8.1px;color:#262626;font-weight:normal;-webkit-text-stroke:0.16px #262626;transform:scaleY(1.11);transform-origin:0 0.8465em">Today, 2:51 PM</div>
<div class="t" style="left:357.40px;top:96.14px;font-size:8.1px;color:#262626;font-weight:normal;-webkit-text-stroke:0.16px #262626;transform:scaleY(1.11);transform-origin:0 0.8465em">text/x-generic</div>
<div class="t" style="left:461.60px;top:96.06px;font-size:8.2px;color:#262626;font-weight:normal;-webkit-text-stroke:0.16px #262626;transform:scaleY(1.11);transform-origin:0 0.8465em">0644</div>
<div class="r" style="left:0px;top:107.52px;width:513.4px;height:17.92px;background:#ffffff;border-top:1px solid #ececec;box-sizing:border-box"></div>
<div class="r" style="left:238.6px;top:107.52px;width:116px;height:17.92px;background:#efefef;border-top:1px solid #e4e4e4;box-sizing:border-box"></div>
<svg class="r" style="left:2.5999999999999943px;top:110.82000000000001px;" width="9" height="11.8" viewBox="0 0 9 11.8"><path d="M0.5 0 H5.2 V3.9 H9 V11.3 Q9 11.8 8.5 11.8 H0.5 Q0 11.8 0 11.3 V0.5 Q0 0 0.5 0Z" fill="#7a5fa6"/><path d="M5.9 0.1 L9 3.3 H5.9Z" fill="#7a5fa6"/><rect x="1.9" y="5.0" width="5.1" height="1.0" fill="#cfc5e0"/><rect x="1.9" y="6.5" width="5.1" height="1.0" fill="#cfc5e0"/><rect x="1.9" y="8.0" width="5.1" height="1.0" fill="#cfc5e0"/></svg>
<div class="t" style="left:23.40px;top:114.06px;font-size:8.1px;color:#262626;font-weight:normal;-webkit-text-stroke:0.16px #262626;transform:scaleY(1.11);transform-origin:0 0.8465em">user-fucntions.backup3</div>
<div class="t" style="left:182.80px;top:114.06px;font-size:8.1px;color:#262626;font-weight:normal;-webkit-text-stroke:0.16px #262626;transform:scaleY(1.11);transform-origin:0 0.8465em">21.11 KB</div>
<div class="t" style="left:241.60px;top:114.06px;font-size:8.1px;color:#262626;font-weight:normal;-webkit-text-stroke:0.16px #262626;transform:scaleY(1.11);transform-origin:0 0.8465em">Today, 2:51 PM</div>
<div class="t" style="left:357.40px;top:114.06px;font-size:8.1px;color:#262626;font-weight:normal;-webkit-text-stroke:0.16px #262626;transform:scaleY(1.11);transform-origin:0 0.8465em">text/x-generic</div>
<div class="t" style="left:461.60px;top:113.98px;font-size:8.2px;color:#262626;font-weight:normal;-webkit-text-stroke:0.16px #262626;transform:scaleY(1.11);transform-origin:0 0.8465em">0644</div>
<div class="r" style="left:0px;top:125.44px;width:513.4px;height:17.92px;background:#f8f8f8;border-top:1px solid #ececec;box-sizing:border-box"></div>
<div class="r" style="left:238.6px;top:125.44px;width:116px;height:17.92px;background:#e1e1e1;border-top:1px solid #e4e4e4;box-sizing:border-box"></div>
<svg class="r" style="left:2.5999999999999943px;top:128.74px;" width="9" height="11.8" viewBox="0 0 9 11.8"><path d="M0.5 0 H5.2 V3.9 H9 V11.3 Q9 11.8 8.5 11.8 H0.5 Q0 11.8 0 11.3 V0.5 Q0 0 0.5 0Z" fill="#7a5fa6"/><path d="M5.9 0.1 L9 3.3 H5.9Z" fill="#7a5fa6"/><rect x="1.9" y="5.0" width="5.1" height="1.0" fill="#cfc5e0"/><rect x="1.9" y="6.5" width="5.1" height="1.0" fill="#cfc5e0"/><rect x="1.9" y="8.0" width="5.1" height="1.0" fill="#cfc5e0"/></svg>
<div class="t" style="left:23.40px;top:131.98px;font-size:8.1px;color:#262626;font-weight:normal;-webkit-text-stroke:0.16px #262626;transform:scaleY(1.11);transform-origin:0 0.8465em">user-fucntions.backup2</div>
<div class="t" style="left:182.80px;top:131.98px;font-size:8.1px;color:#262626;font-weight:normal;-webkit-text-stroke:0.16px #262626;transform:scaleY(1.11);transform-origin:0 0.8465em">21.11 KB</div>
<div class="t" style="left:241.60px;top:131.98px;font-size:8.1px;color:#262626;font-weight:normal;-webkit-text-stroke:0.16px #262626;transform:scaleY(1.11);transform-origin:0 0.8465em">Today, 2:51 PM</div>
<div class="t" style="left:357.40px;top:131.98px;font-size:8.1px;color:#262626;font-weight:normal;-webkit-text-stroke:0.16px #262626;transform:scaleY(1.11);transform-origin:0 0.8465em">text/x-generic</div>
<div class="t" style="left:461.60px;top:131.90px;font-size:8.2px;color:#262626;font-weight:normal;-webkit-text-stroke:0.16px #262626;transform:scaleY(1.11);transform-origin:0 0.8465em">0644</div>
<div class="r" style="left:0px;top:143.36px;width:513.4px;height:17.92px;background:#ffffff;border-top:1px solid #ececec;box-sizing:border-box"></div>
<div class="r" style="left:238.6px;top:143.36px;width:116px;height:17.92px;background:#efefef;border-top:1px solid #e4e4e4;box-sizing:border-box"></div>
<svg class="r" style="left:2.5999999999999943px;top:146.66000000000003px;" width="9" height="11.8" viewBox="0 0 9 11.8"><path d="M0.5 0 H5.2 V3.9 H9 V11.3 Q9 11.8 8.5 11.8 H0.5 Q0 11.8 0 11.3 V0.5 Q0 0 0.5 0Z" fill="#7a5fa6"/><path d="M5.9 0.1 L9 3.3 H5.9Z" fill="#7a5fa6"/><rect x="1.9" y="5.0" width="5.1" height="1.0" fill="#cfc5e0"/><rect x="1.9" y="6.5" width="5.1" height="1.0" fill="#cfc5e0"/><rect x="1.9" y="8.0" width="5.1" height="1.0" fill="#cfc5e0"/></svg>
<div class="t" style="left:23.40px;top:149.90px;font-size:8.1px;color:#262626;font-weight:normal;-webkit-text-stroke:0.16px #262626;transform:scaleY(1.11);transform-origin:0 0.8465em">formatting.php</div>
<div class="t" style="left:182.80px;top:149.90px;font-size:8.1px;color:#262626;font-weight:normal;-webkit-text-stroke:0.16px #262626;transform:scaleY(1.11);transform-origin:0 0.8465em">267.08 KB</div>
<div class="t" style="left:241.60px;top:149.90px;font-size:8.1px;color:#262626;font-weight:normal;-webkit-text-stroke:0.16px #262626;transform:scaleY(1.11);transform-origin:0 0.8465em">Jan 18, 2022, 10:17 PM</div>
<div class="t" style="left:357.40px;top:149.90px;font-size:8.1px;color:#262626;font-weight:normal;-webkit-text-stroke:0.16px #262626;transform:scaleY(1.11);transform-origin:0 0.8465em">text/x-generic</div>
<div class="t" style="left:461.60px;top:149.82px;font-size:8.2px;color:#262626;font-weight:normal;-webkit-text-stroke:0.16px #262626;transform:scaleY(1.11);transform-origin:0 0.8465em">0644</div>
<div class="r" style="left:0px;top:161.28px;width:513.4px;height:17.92px;background:#f8f8f8;border-top:1px solid #ececec;box-sizing:border-box"></div>
<div class="r" style="left:238.6px;top:161.28px;width:116px;height:17.92px;background:#e1e1e1;border-top:1px solid #e4e4e4;box-sizing:border-box"></div>
<svg class="r" style="left:2.5999999999999943px;top:164.58000000000004px;" width="9" height="11.8" viewBox="0 0 9 11.8"><path d="M0.5 0 H5.2 V3.9 H9 V11.3 Q9 11.8 8.5 11.8 H0.5 Q0 11.8 0 11.3 V0.5 Q0 0 0.5 0Z" fill="#7a5fa6"/><path d="M5.9 0.1 L9 3.3 H5.9Z" fill="#7a5fa6"/><rect x="1.9" y="5.0" width="5.1" height="1.0" fill="#cfc5e0"/><rect x="1.9" y="6.5" width="5.1" height="1.0" fill="#cfc5e0"/><rect x="1.9" y="8.0" width="5.1" height="1.0" fill="#cfc5e0"/></svg>
<div class="t" style="left:23.40px;top:167.82px;font-size:8.1px;color:#262626;font-weight:normal;-webkit-text-stroke:0.16px #262626;transform:scaleY(1.11);transform-origin:0 0.8465em">post.php</div>
<div class="t" style="left:182.80px;top:167.82px;font-size:8.1px;color:#262626;font-weight:normal;-webkit-text-stroke:0.16px #262626;transform:scaleY(1.11);transform-origin:0 0.8465em">220.04 KB</div>
<div class="t" style="left:241.60px;top:167.82px;font-size:8.1px;color:#262626;font-weight:normal;-webkit-text-stroke:0.16px #262626;transform:scaleY(1.11);transform-origin:0 0.8465em">Jan 18, 2022, 10:16 PM</div>
<div class="t" style="left:357.40px;top:167.82px;font-size:8.1px;color:#262626;font-weight:normal;-webkit-text-stroke:0.16px #262626;transform:scaleY(1.11);transform-origin:0 0.8465em">text/x-generic</div>
<div class="t" style="left:461.60px;top:167.74px;font-size:8.2px;color:#262626;font-weight:normal;-webkit-text-stroke:0.16px #262626;transform:scaleY(1.11);transform-origin:0 0.8465em">0644</div>
<div class="r" style="left:0px;top:179.2px;width:513.4px;height:17.92px;background:#ffffff;border-top:1px solid #ececec;box-sizing:border-box"></div>
<div class="r" style="left:238.6px;top:179.2px;width:116px;height:17.92px;background:#efefef;border-top:1px solid #e4e4e4;box-sizing:border-box"></div>
<svg class="r" style="left:2.5999999999999943px;top:182.5px;" width="9" height="11.8" viewBox="0 0 9 11.8"><path d="M0.5 0 H5.2 V3.9 H9 V11.3 Q9 11.8 8.5 11.8 H0.5 Q0 11.8 0 11.3 V0.5 Q0 0 0.5 0Z" fill="#7a5fa6"/><path d="M5.9 0.1 L9 3.3 H5.9Z" fill="#7a5fa6"/><rect x="1.9" y="5.0" width="5.1" height="1.0" fill="#cfc5e0"/><rect x="1.9" y="6.5" width="5.1" height="1.0" fill="#cfc5e0"/><rect x="1.9" y="8.0" width="5.1" height="1.0" fill="#cfc5e0"/></svg>
<div class="t" style="left:23.40px;top:185.74px;font-size:8.1px;color:#262626;font-weight:normal;-webkit-text-stroke:0.16px #262626;transform:scaleY(1.11);transform-origin:0 0.8465em">class-wp-tax-query.php</div>
<div class="t" style="left:182.80px;top:185.74px;font-size:8.1px;color:#262626;font-weight:normal;-webkit-text-stroke:0.16px #262626;transform:scaleY(1.11);transform-origin:0 0.8465em">18.92 KB</div>
<div class="t" style="left:241.60px;top:185.74px;font-size:8.1px;color:#262626;font-weight:normal;-webkit-text-stroke:0.16px #262626;transform:scaleY(1.11);transform-origin:0 0.8465em">Jan 18, 2022, 9:29 PM</div>
<div class="t" style="left:357.40px;top:185.74px;font-size:8.1px;color:#262626;font-weight:normal;-webkit-text-stroke:0.16px #262626;transform:scaleY(1.11);transform-origin:0 0.8465em">text/x-generic</div>
<div class="t" style="left:461.60px;top:185.66px;font-size:8.2px;color:#262626;font-weight:normal;-webkit-text-stroke:0.16px #262626;transform:scaleY(1.11);transform-origin:0 0.8465em">0644</div>
<div class="r" style="left:0px;top:197.12px;width:513.4px;height:17.92px;background:#f8f8f8;border-top:1px solid #ececec;box-sizing:border-box"></div>
<div class="r" style="left:238.6px;top:197.12px;width:116px;height:17.92px;background:#e1e1e1;border-top:1px solid #e4e4e4;box-sizing:border-box"></div>
<svg class="r" style="left:2.5999999999999943px;top:200.42000000000002px;" width="9" height="11.8" viewBox="0 0 9 11.8"><path d="M0.5 0 H5.2 V3.9 H9 V11.3 Q9 11.8 8.5 11.8 H0.5 Q0 11.8 0 11.3 V0.5 Q0 0 0.5 0Z" fill="#7a5fa6"/><path d="M5.9 0.1 L9 3.3 H5.9Z" fill="#7a5fa6"/><rect x="1.9" y="5.0" width="5.1" height="1.0" fill="#cfc5e0"/><rect x="1.9" y="6.5" width="5.1" height="1.0" fill="#cfc5e0"/><rect x="1.9" y="8.0" width="5.1" height="1.0" fill="#cfc5e0"/></svg>
<div class="t" style="left:23.40px;top:203.66px;font-size:8.1px;color:#262626;font-weight:normal;-webkit-text-stroke:0.16px #262626;transform:scaleY(1.11);transform-origin:0 0.8465em">class-wp-meta-query.php</div>
<div class="t" style="left:182.80px;top:203.66px;font-size:8.1px;color:#262626;font-weight:normal;-webkit-text-stroke:0.16px #262626;transform:scaleY(1.11);transform-origin:0 0.8465em">21.76 KB</div>
<div class="t" style="left:241.60px;top:203.66px;font-size:8.1px;color:#262626;font-weight:normal;-webkit-text-stroke:0.16px #262626;transform:scaleY(1.11);transform-origin:0 0.8465em">Jan 18, 2022, 8:49 PM</div>
<div class="t" style="left:357.40px;top:203.66px;font-size:8.1px;color:#262626;font-weight:normal;-webkit-text-stroke:0.16px #262626;transform:scaleY(1.11);transform-origin:0 0.8465em">text/x-generic</div>
<div class="t" style="left:461.60px;top:203.58px;font-size:8.2px;color:#262626;font-weight:normal;-webkit-text-stroke:0.16px #262626;transform:scaleY(1.11);transform-origin:0 0.8465em">0644</div>
<div class="r" style="left:0px;top:215.04px;width:513.4px;height:17.92px;background:#ffffff;border-top:1px solid #ececec;box-sizing:border-box"></div>
<div class="r" style="left:238.6px;top:215.04px;width:116px;height:17.92px;background:#efefef;border-top:1px solid #e4e4e4;box-sizing:border-box"></div>
<svg class="r" style="left:2.5999999999999943px;top:218.34000000000003px;" width="9" height="11.8" viewBox="0 0 9 11.8"><path d="M0.5 0 H5.2 V3.9 H9 V11.3 Q9 11.8 8.5 11.8 H0.5 Q0 11.8 0 11.3 V0.5 Q0 0 0.5 0Z" fill="#7a5fa6"/><path d="M5.9 0.1 L9 3.3 H5.9Z" fill="#7a5fa6"/><rect x="1.9" y="5.0" width="5.1" height="1.0" fill="#cfc5e0"/><rect x="1.9" y="6.5" width="5.1" height="1.0" fill="#cfc5e0"/><rect x="1.9" y="8.0" width="5.1" height="1.0" fill="#cfc5e0"/></svg>
<div class="t" style="left:23.40px;top:221.58px;font-size:8.1px;color:#262626;font-weight:normal;-webkit-text-stroke:0.16px #262626;transform:scaleY(1.11);transform-origin:0 0.8465em">class-phpmailer.php</div>
<div class="t" style="left:182.80px;top:221.58px;font-size:8.1px;color:#262626;font-weight:normal;-webkit-text-stroke:0.16px #262626;transform:scaleY(1.11);transform-origin:0 0.8465em">144.58 KB</div>
<div class="t" style="left:241.60px;top:221.58px;font-size:8.1px;color:#262626;font-weight:normal;-webkit-text-stroke:0.16px #262626;transform:scaleY(1.11);transform-origin:0 0.8465em">May 21, 2021, 2:26 PM</div>
<div class="t" style="left:357.40px;top:221.58px;font-size:8.1px;color:#262626;font-weight:normal;-webkit-text-stroke:0.16px #262626;transform:scaleY(1.11);transform-origin:0 0.8465em">text/x-generic</div>
<div class="t" style="left:461.60px;top:221.50px;font-size:8.2px;color:#262626;font-weight:normal;-webkit-text-stroke:0.16px #262626;transform:scaleY(1.11);transform-origin:0 0.8465em">0644</div>
<div class="r" style="left:0px;top:232.96px;width:513.4px;height:17.92px;background:#f8f8f8;border-top:1px solid #ececec;box-sizing:border-box"></div>
<div class="r" style="left:238.6px;top:232.96px;width:116px;height:17.92px;background:#e1e1e1;border-top:1px solid #e4e4e4;box-sizing:border-box"></div>
<svg class="r" style="left:2.5999999999999943px;top:236.26000000000005px;" width="9" height="11.8" viewBox="0 0 9 11.8"><path d="M0.5 0 H5.2 V3.9 H9 V11.3 Q9 11.8 8.5 11.8 H0.5 Q0 11.8 0 11.3 V0.5 Q0 0 0.5 0Z" fill="#7a5fa6"/><path d="M5.9 0.1 L9 3.3 H5.9Z" fill="#7a5fa6"/><rect x="1.9" y="5.0" width="5.1" height="1.0" fill="#cfc5e0"/><rect x="1.9" y="6.5" width="5.1" height="1.0" fill="#cfc5e0"/><rect x="1.9" y="8.0" width="5.1" height="1.0" fill="#cfc5e0"/></svg>
<div class="t" style="left:23.40px;top:239.50px;font-size:8.1px;color:#262626;font-weight:normal;-webkit-text-stroke:0.16px #262626;transform:scaleY(1.11);transform-origin:0 0.8465em">meta.php</div>
<div class="t" style="left:182.80px;top:239.50px;font-size:8.1px;color:#262626;font-weight:normal;-webkit-text-stroke:0.16px #262626;transform:scaleY(1.11);transform-origin:0 0.8465em">44.55 KB</div>
<div class="t" style="left:241.60px;top:239.50px;font-size:8.1px;color:#262626;font-weight:normal;-webkit-text-stroke:0.16px #262626;transform:scaleY(1.11);transform-origin:0 0.8465em">Nov 10, 2020, 11:32 PM</div>
<div class="t" style="left:357.40px;top:239.50px;font-size:8.1px;color:#262626;font-weight:normal;-webkit-text-stroke:0.16px #262626;transform:scaleY(1.11);transform-origin:0 0.8465em">text/x-generic</div>
<div class="t" style="left:461.60px;top:239.42px;font-size:8.2px;color:#262626;font-weight:normal;-webkit-text-stroke:0.16px #262626;transform:scaleY(1.11);transform-origin:0 0.8465em">0644</div>
<div class="r" style="left:0px;top:250.88px;width:513.4px;height:17.92px;background:#ffffff;border-top:1px solid #ececec;box-sizing:border-box"></div>
<div class="r" style="left:238.6px;top:250.88px;width:116px;height:17.92px;background:#efefef;border-top:1px solid #e4e4e4;box-sizing:border-box"></div>
<svg class="r" style="left:2.5999999999999943px;top:254.18000000000006px;" width="9" height="11.8" viewBox="0 0 9 11.8"><path d="M0.5 0 H5.2 V3.9 H9 V11.3 Q9 11.8 8.5 11.8 H0.5 Q0 11.8 0 11.3 V0.5 Q0 0 0.5 0Z" fill="#7a5fa6"/><path d="M5.9 0.1 L9 3.3 H5.9Z" fill="#7a5fa6"/><rect x="1.9" y="5.0" width="5.1" height="1.0" fill="#cfc5e0"/><rect x="1.9" y="6.5" width="5.1" height="1.0" fill="#cfc5e0"/><rect x="1.9" y="8.0" width="5.1" height="1.0" fill="#cfc5e0"/></svg>
<div class="t" style="left:23.40px;top:257.42px;font-size:8.1px;color:#262626;font-weight:normal;-webkit-text-stroke:0.16px #262626;transform:scaleY(1.11);transform-origin:0 0.8465em">embed.php</div>
<div class="t" style="left:182.80px;top:257.42px;font-size:8.1px;color:#262626;font-weight:normal;-webkit-text-stroke:0.16px #262626;transform:scaleY(1.11);transform-origin:0 0.8465em">43.96 KB</div>
<div class="t" style="left:241.60px;top:257.42px;font-size:8.1px;color:#262626;font-weight:normal;-webkit-text-stroke:0.16px #262626;transform:scaleY(1.11);transform-origin:0 0.8465em">Nov 10, 2020, 9:20 PM</div>
<div class="t" style="left:357.40px;top:257.42px;font-size:8.1px;color:#262626;font-weight:normal;-webkit-text-stroke:0.16px #262626;transform:scaleY(1.11);transform-origin:0 0.8465em">text/x-generic</div>
<div class="t" style="left:461.60px;top:257.34px;font-size:8.2px;color:#262626;font-weight:normal;-webkit-text-stroke:0.16px #262626;transform:scaleY(1.11);transform-origin:0 0.8465em">0644</div>
<div class="r" style="left:0px;top:268.8px;width:513.4px;height:17.92px;background:#f8f8f8;border-top:1px solid #ececec;box-sizing:border-box"></div>
<div class="r" style="left:238.6px;top:268.8px;width:116px;height:17.92px;background:#e1e1e1;border-top:1px solid #e4e4e4;box-sizing:border-box"></div>
<svg class="r" style="left:2.5999999999999943px;top:272.1px;" width="9" height="11.8" viewBox="0 0 9 11.8"><path d="M0.5 0 H5.2 V3.9 H9 V11.3 Q9 11.8 8.5 11.8 H0.5 Q0 11.8 0 11.3 V0.5 Q0 0 0.5 0Z" fill="#7a5fa6"/><path d="M5.9 0.1 L9 3.3 H5.9Z" fill="#7a5fa6"/><rect x="1.9" y="5.0" width="5.1" height="1.0" fill="#cfc5e0"/><rect x="1.9" y="6.5" width="5.1" height="1.0" fill="#cfc5e0"/><rect x="1.9" y="8.0" width="5.1" height="1.0" fill="#cfc5e0"/></svg>
<div class="t" style="left:23.40px;top:275.34px;font-size:8.1px;color:#262626;font-weight:normal;-webkit-text-stroke:0.16px #262626;transform:scaleY(1.11);transform-origin:0 0.8465em">class-wp-xmlrpc-server.php</div>
<div class="t" style="left:182.80px;top:275.34px;font-size:8.1px;color:#262626;font-weight:normal;-webkit-text-stroke:0.16px #262626;transform:scaleY(1.11);transform-origin:0 0.8465em">197.41 KB</div>
<div class="t" style="left:241.60px;top:275.34px;font-size:8.1px;color:#262626;font-weight:normal;-webkit-text-stroke:0.16px #262626;transform:scaleY(1.11);transform-origin:0 0.8465em">Nov 10, 2020, 6:09 PM</div>
<div class="t" style="left:357.40px;top:275.34px;font-size:8.1px;color:#262626;font-weight:normal;-webkit-text-stroke:0.16px #262626;transform:scaleY(1.11);transform-origin:0 0.8465em">text/x-generic</div>
<div class="t" style="left:461.60px;top:275.26px;font-size:8.2px;color:#262626;font-weight:normal;-webkit-text-stroke:0.16px #262626;transform:scaleY(1.11);transform-origin:0 0.8465em">0644</div>
<div class="r" style="left:0px;top:286.72px;width:513.4px;height:17.92px;background:#ffffff;border-top:1px solid #ececec;box-sizing:border-box"></div>
<div class="r" style="left:238.6px;top:286.72px;width:116px;height:17.92px;background:#efefef;border-top:1px solid #e4e4e4;box-sizing:border-box"></div>
<svg class="r" style="left:2.5999999999999943px;top:290.02000000000004px;" width="9" height="11.8" viewBox="0 0 9 11.8"><path d="M0.5 0 H5.2 V3.9 H9 V11.3 Q9 11.8 8.5 11.8 H0.5 Q0 11.8 0 11.3 V0.5 Q0 0 0.5 0Z" fill="#7a5fa6"/><path d="M5.9 0.1 L9 3.3 H5.9Z" fill="#7a5fa6"/><rect x="1.9" y="5.0" width="5.1" height="1.0" fill="#cfc5e0"/><rect x="1.9" y="6.5" width="5.1" height="1.0" fill="#cfc5e0"/><rect x="1.9" y="8.0" width="5.1" height="1.0" fill="#cfc5e0"/></svg>
<div class="t" style="left:23.40px;top:294.16px;font-size:8.1px;color:#262626;font-weight:normal;-webkit-text-stroke:0.16px #262626;transform:scaleY(1.11);transform-origin:0 0.8465em">comment-template.php</div>
<div class="t" style="left:182.80px;top:294.16px;font-size:8.1px;color:#262626;font-weight:normal;-webkit-text-stroke:0.16px #262626;transform:scaleY(1.11);transform-origin:0 0.8465em">90.71 KB</div>
<div class="t" style="left:241.60px;top:294.16px;font-size:8.1px;color:#262626;font-weight:normal;-webkit-text-stroke:0.16px #262626;transform:scaleY(1.11);transform-origin:0 0.8465em">Jan 30, 2020, 6:40 PM</div>
<div class="t" style="left:357.40px;top:294.16px;font-size:8.1px;color:#262626;font-weight:normal;-webkit-text-stroke:0.16px #262626;transform:scaleY(1.11);transform-origin:0 0.8465em">text/x-generic</div>
<div class="t" style="left:461.60px;top:294.08px;font-size:8.2px;color:#262626;font-weight:normal;-webkit-text-stroke:0.16px #262626;transform:scaleY(1.11);transform-origin:0 0.8465em">0644</div>
</div>
<div class="r" style="left:708px;top:135.8px;width:8.5px;height:296px;background:#fafafa;border-left:1px solid #eee;box-sizing:border-box"></div>
<div class="r" style="left:710px;top:137px;width:4.6px;height:20px;background:#c1c1c1;border-radius:2.3px"></div>
<div class="r" style="left:716.2px;top:115.4px;width:1px;height:325px;background:#e6e6e6;"></div>
<div class="r" style="left:194.4px;top:431.6px;width:522.1px;height:8px;background:#f3f3f3;"></div>
<div class="r" style="left:195.3px;top:433.5px;width:505.7px;height:5px;background:#bdbdbd;border-radius:2.5px"></div>
<div class="r" style="left:194.4px;top:439.6px;width:522.1px;height:1.4px;background:#9a9a9a;"></div>
<div class="r" style="left:191px;top:134px;width:360px;height:147px;background:transparent;border:4px solid #ff1e1e;border-radius:3.5px;box-sizing:border-box"></div>
</body></html>
